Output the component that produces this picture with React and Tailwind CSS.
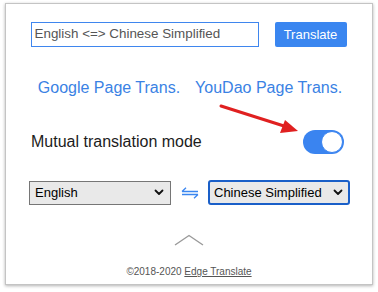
import React from "react";

function Chevron() {
  return (
    <svg width="10" height="7" viewBox="0 0 10 7" className="shrink-0">
      <path d="M1.5 1.5 L5 5 L8.5 1.5" fill="none" stroke="#111" strokeWidth="1.8" strokeLinecap="round" strokeLinejoin="round" />
    </svg>
  );
}

export default function App() {
  return (
    <div className="relative w-[378px] h-[292px] bg-white" style={{ fontFamily: '"Liberation Sans", Arial, sans-serif' }}>
      <div className="absolute left-[5px] top-[3px] w-[368px] h-[282px] bg-white border border-[#c4c4c4] shadow-[0_1px_3px_rgba(0,0,0,0.3)] flex flex-col">
        {/* row 1 */}
        <div className="flex items-center justify-center gap-[16px] mt-[18px] pr-[1px]">
          <div className="w-[228px] h-[25px] border border-[#3f86ee] flex items-center pl-[3px] text-[13.4px] text-[#555]">
            English &lt;=&gt; Chinese Simplified
          </div>
          <div className="w-[72px] h-[25px] bg-[#3a86f0] rounded-[2px] text-white text-[13px] flex items-center justify-center">
            Translate
          </div>
        </div>
        {/* row 2 */}
        <div className="flex justify-center gap-[15px] mt-[31px] pl-[2px] text-[16px] text-[#3a82e4] leading-[20px]">
          <span>Google Page Trans.</span>
          <span>YouDao Page Trans.</span>
        </div>
        {/* row 3 */}
        <div className="flex items-center justify-between mt-[32px] pl-[25px] pr-[28px]">
          <span className="text-[16px] text-[#1c1c1c] leading-[20px]">Mutual translation mode</span>
          <div className="w-[41px] h-[24px] rounded-full bg-[#3a84f0] flex items-center justify-end pr-[1px]">
            <div className="w-[22px] h-[22px] rounded-full bg-white border border-[#3a84f0]" />
          </div>
        </div>
        {/* row 4 */}
        <div className="flex items-center mt-[26px] pl-[23px]">
          <div className="w-[142px] h-[24px] bg-[#e9e9e9] border border-[#767676] flex items-center justify-between pl-[5px] pr-[6px] text-[13px] text-black">
            <span>English</span>
            <Chevron />
          </div>
          <svg width="18" height="12" viewBox="0 0 18 12" className="ml-[10px]">
            <path d="M1 4.5 H17 M1 4.5 L5 0.8" fill="none" stroke="#3a86f0" strokeWidth="1.3" />
            <path d="M1 7.5 H17 M17 7.5 L13 11.2" fill="none" stroke="#3a86f0" strokeWidth="1.3" />
          </svg>
          <div className="ml-[9px] w-[142px] h-[25px] bg-[#e9e9e9] border-2 border-[#1a5fc8] rounded-[3px] flex items-center justify-between pl-[4px] pr-[5px] text-[13px] text-black">
            <span>Chinese Simplified</span>
            <Chevron />
          </div>
        </div>
        {/* chevron up */}
        <div className="flex justify-center mt-[29px] pr-[1px]">
          <svg width="30" height="12" viewBox="0 0 30 12">
            <path d="M1 11 L15 1.5 L29 11" fill="none" stroke="#9a9a9a" strokeWidth="1.4" />
          </svg>
        </div>
        {/* footer */}
        <div className="flex justify-center mt-[19px] text-[10px] text-[#555] leading-[14px]">
          <span>©2018-2020&nbsp;</span>
          <span className="underline">Edge Translate</span>
        </div>
      </div>
      {/* red arrow */}
      <svg className="absolute left-0 top-0 pointer-events-none" width="378" height="292" viewBox="0 0 378 292">
        <line x1="221" y1="106" x2="284" y2="126" stroke="#e02020" strokeWidth="3" strokeLinecap="round" />
        <polygon points="298,131 280,133 285,120" fill="#e02020" />
      </svg>
    </div>
  );
}
